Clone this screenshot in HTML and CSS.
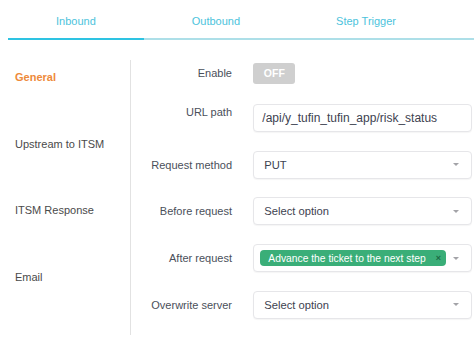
FILE: index.html
```html
<!DOCTYPE html>
<html>
<head>
<meta charset="utf-8">
<link rel="stylesheet" href="styles.css">
</head>
<body>
<div class="page">
  <div class="tabs">
    <div class="tab active">Inbound</div>
    <div class="tab">Outbound</div>
    <div class="tab">Step Trigger</div>
  </div>
  <div class="content">
    <ul class="side">
      <li class="side-item current">General</li>
      <li class="side-item">Upstream to ITSM</li>
      <li class="side-item">ITSM Response</li>
      <li class="side-item">Email</li>
    </ul>
    <div class="form">
      <div class="row row-enable">
        <div class="label">Enable</div>
        <div class="control"><span class="toggle">OFF</span></div>
      </div>
      <div class="row">
        <div class="label label-top">URL path</div>
        <div class="control"><div class="input">/api/y_tufin_tufin_app/risk_status</div></div>
      </div>
      <div class="row">
        <div class="label">Request method</div>
        <div class="control"><div class="select"><span class="value">PUT</span><span class="arrow"></span></div></div>
      </div>
      <div class="row">
        <div class="label">Before request</div>
        <div class="control"><div class="select"><span class="value">Select option</span><span class="arrow"></span></div></div>
      </div>
      <div class="row">
        <div class="label">After request</div>
        <div class="control"><div class="select select-tags"><span class="tag">Advance the ticket to the next step<span class="tag-x">×</span></span><span class="arrow"></span></div></div>
      </div>
      <div class="row">
        <div class="label">Overwrite server</div>
        <div class="control"><div class="select"><span class="value">Select option</span><span class="arrow"></span></div></div>
      </div>
    </div>
  </div>
</div>
</body>
</html>
```
FILE: styles.css
```css
* { box-sizing: border-box; }
html, body { margin: 0; padding: 0; background: #fff; }
body {
  font-family: "Liberation Sans", Arial, sans-serif;
  font-size: 11px;
  color: #4a4f5a;
  overflow: hidden;
}
.page { padding-left: 8px; width: 474px; }

.tabs {
  display: flex;
  border-bottom: 2px solid #addfe8;
  height: 40px;
}
.tab {
  padding: 13px 48px 9px;
  line-height: 16px;
  color: #4cc3dc;
  font-size: 11px;
  white-space: nowrap;
}
.tab.active {
  border-bottom: 2px solid #2ec3e2;
  margin-bottom: -2px;
}

.content {
  display: flex;
  margin-top: 20px;
}
.side {
  list-style: none;
  margin: 0;
  padding: 9px 0 0 7px;
  width: 122px;
  display: flex;
  flex-direction: column;
  gap: 50.7px;
}
.side-item {
  line-height: 16px;
  color: #4a4a4a;
  white-space: nowrap;
}
.side-item.current { color: #ee8a3a; font-weight: bold; }

.form {
  border-left: 1px solid #e2e2e2;
  display: flex;
  flex-direction: column;
  gap: 18.7px;
  padding-bottom: 16px;
  flex: 1;
}
.row {
  display: flex;
  align-items: center;
  height: 28px;
}
.row-enable { height: 26px; margin-bottom: -0.7px; }
.label {
  width: 101px;
  text-align: right;
  line-height: 16px;
  white-space: nowrap;
  color: #4a4f5a;
}
.label-top { align-self: flex-start; }
.control {
  margin-left: 21.3px;
  width: 219px;
}
.toggle {
  display: inline-block;
  width: 42px;
  height: 21px;
  line-height: 21px;
  background: #cfcfcf;
  border-radius: 3px;
  color: #fff;
  font-weight: bold;
  font-size: 10.5px;
  text-align: center;
  vertical-align: middle;
}
.input, .select {
  height: 28px;
  border: 1px solid #e6e6e9;
  border-radius: 4px;
  box-shadow: 0 1px 1px rgba(0,0,0,0.04);
  display: flex;
  align-items: center;
  color: #3d4250;
  font-size: 12px;
  background: #fff;
}
.input { padding-left: 8px; }
.select { padding-left: 10px; padding-right: 12px; justify-content: space-between; }
.select-tags { padding-left: 6px; }
.value { font-size: 11.2px; white-space: nowrap; }
.arrow {
  width: 0; height: 0;
  border-left: 3px solid transparent;
  border-right: 3px solid transparent;
  border-top: 3px solid #a3a3a8;
}
.tag {
  display: inline-flex;
  align-items: center;
  height: 16px;
  background: #3aae78;
  color: #fff;
  border-radius: 4px;
  font-size: 10.3px;
  padding: 0 5px 0 8px;
  white-space: nowrap;
}
.tag-x {
  margin-left: 10px;
  color: #1d6b45;
  font-weight: bold;
  font-size: 9px;
}
```
